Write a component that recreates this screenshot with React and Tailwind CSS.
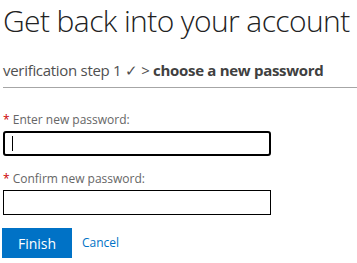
const App = () => {
   return (
      <div className="w-[357px] h-[263px] bg-white overflow-hidden pl-[3px]" style={{ fontFamily: '"Open Sans", "Noto Sans", sans-serif' }}>
         <h1 className="text-[30px] font-light leading-[41px] text-[#222] tracking-[-0.6px]">Get back into your account</h1>

         <div className="mt-[19px] border-b border-b-[#a6a6a6] pb-[7px] text-[15px] leading-[20px] text-[#505050] tracking-[-0.3px] whitespace-nowrap">
            verification step 1 &#10003; &gt; <span className="font-bold text-[#404040]">choose a new password</span>
         </div>

         <div className="mt-[24px]">
            <label className="block text-[12px] leading-[16px] text-[#666]">
               <span className="text-[#c00]">*</span> Enter new password:
            </label>
            <div className="mt-[3px] w-[268px] h-[25px] border-2 border-black rounded-[3px] flex items-center pl-[7px]">
               <span className="block w-px h-[15px] bg-black"></span>
            </div>
         </div>

         <div className="mt-[15px]">
            <label className="block text-[12px] leading-[16px] text-[#666]">
               <span className="text-[#c00]">*</span> Confirm new password:
            </label>
            <div className="mt-[3px] w-[268px] h-[25px] border border-black"></div>
         </div>

         <div className="mt-[13px] flex items-center gap-[10px]">
            <button className="w-[70px] h-[30px] bg-[#0072c6] text-white text-[14px] ml-[-1px]">Finish</button>
            <a className="text-[12px] text-[#0072c6]">Cancel</a>
         </div>
      </div>
   )
}

export default App
